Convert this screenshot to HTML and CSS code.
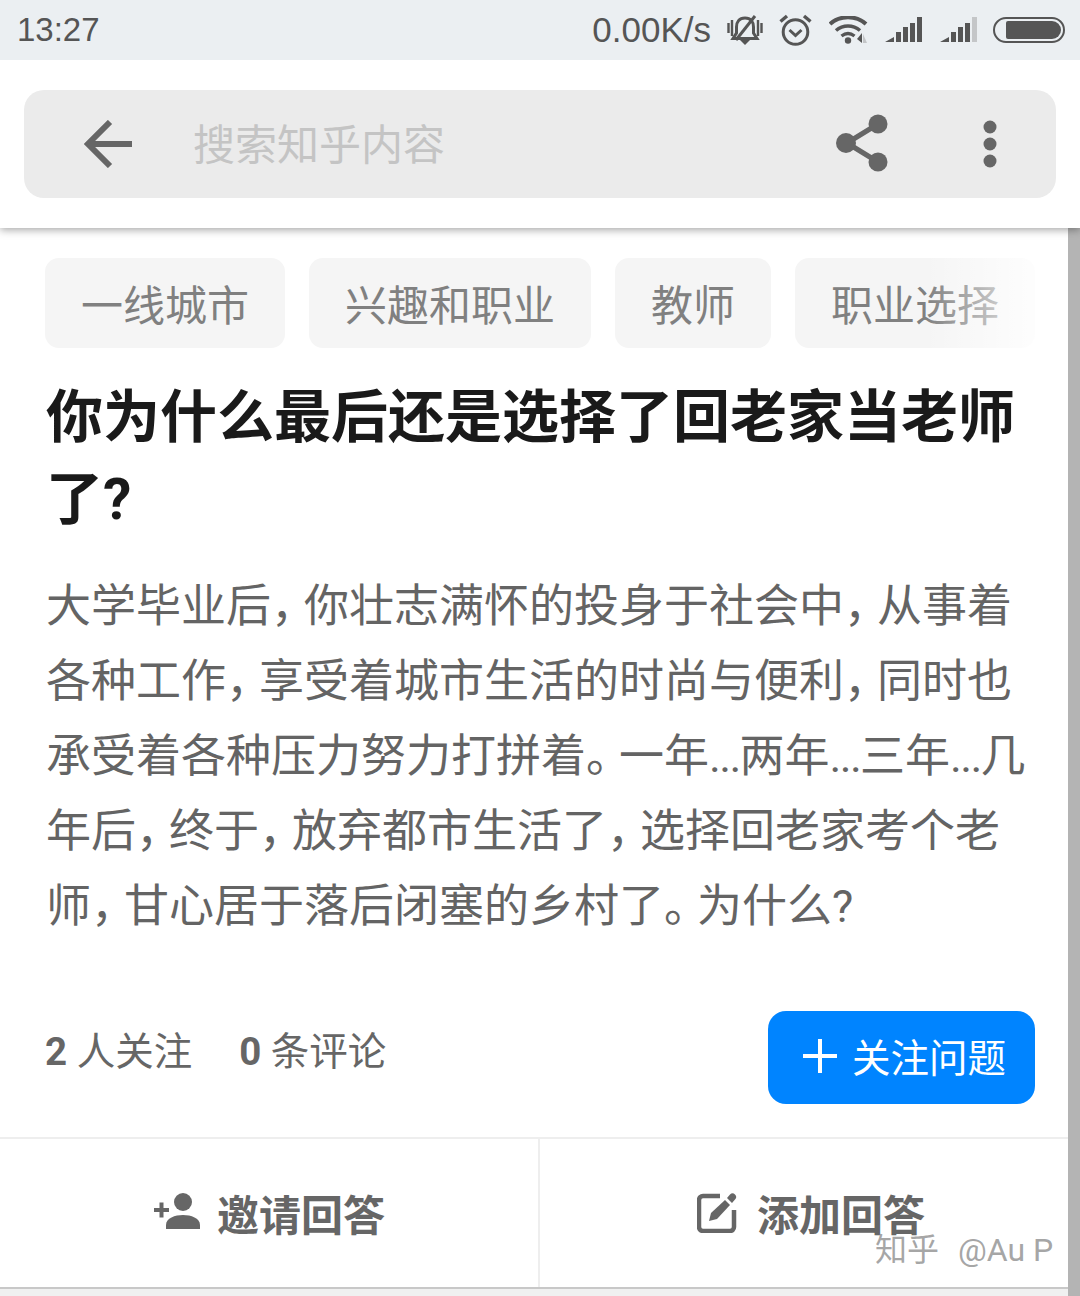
FILE: index.html
```html
<!DOCTYPE html>
<html>
  <head>
    <meta charset="utf-8" />
    <title>你为什么最后还是选择了回老家当老师了?</title>
    <link rel="stylesheet" href="styles.css">
  </head>
  <body>
    <div class="statusbar">
      <span class="clock">13:27</span>
      <div class="status-right">
        <span class="speed">0.00K/s</span>
        <svg class="ic-bell" width="36" height="32" viewBox="0 0 36 32">
          <path d="M18 4c-6 0-8.500 4-8.500 9v6l-3.500 5.500h24l-3.500-5.500v-6c0-5-2.500-9-8.500-9z" fill="none" stroke="#555" stroke-width="3"/>
          <path d="M13 26h10l-5 5z" fill="#555"/>
          <path d="M9 26L28 2" stroke="#555" stroke-width="3"/>
          <path d="M1.500 9v10M5 6v16M31 6v16M34.500 9v10" stroke="#555" stroke-width="2.400"/>
        </svg>
        <svg class="ic-alarm" width="33" height="32" viewBox="0 0 33 32">
          <circle cx="16.500" cy="18" r="12.300" fill="none" stroke="#555" stroke-width="3"/>
          <path d="M10.500 16l6 5.500 6-5.500" fill="none" stroke="#555" stroke-width="3"/>
          <path d="M1.500 7.500L8 2M31.500 7.500L25 2" stroke="#555" stroke-width="3.400"/>
        </svg>
        <svg class="ic-wifi" width="39" height="28" viewBox="0 0 39 28">
          <path d="M1 8c10-9 26-9 36 0" fill="none" stroke="#555" stroke-width="4"/>
          <path d="M7 14.500c7-6 17-6 24 0" fill="none" stroke="#555" stroke-width="3.600"/>
          <path d="M12.500 20c4-3 9-3 13 0" fill="none" stroke="#555" stroke-width="3.400"/>
          <circle cx="19" cy="24.500" r="3.200" fill="#555"/>
          <path d="M33 17v10l-5-4z" fill="#555"/>
          <path d="M34 18l4 9h-4z" fill="#c4c6c8"/>
        </svg>
        <svg class="ic-signal" width="38" height="26" viewBox="0 0 38 26">
          <path d="M0 25l9-5v5zM11 15h5v10h-5zM18 10h5v15h-5zM25 6h5v19h-5zM32 0h5v25h-5z" fill="#555"/>
        </svg>
        <svg class="ic-signal2" width="38" height="26" viewBox="0 0 38 26">
          <path d="M0 25l9-5v5zM11 15h5v10h-5zM18 10h5v15h-5zM25 6h5v19h-5z" fill="#555"/>
          <path d="M32 0h5v25h-5z" fill="#c4c6c8"/>
        </svg>
        <div class="battery"><div class="battery-fill"></div></div>
      </div>
    </div>

    <div class="header">
      <div class="searchbox">
        <svg class="ic-back" width="48" height="48" viewBox="0 0 48 48">
          <path d="M48 24H5M26 2L4 24l22 22" fill="none" stroke="#666" stroke-width="6"/>
        </svg>
        <span class="placeholder">搜索知乎内容</span>
        <svg class="ic-share" width="54" height="60" viewBox="0 0 54 60">
          <path d="M12 29L43 10M12 29l31 19" stroke="#666" stroke-width="5"/>
          <circle cx="11" cy="29" r="10" fill="#666"/>
          <circle cx="43" cy="10" r="9.500" fill="#666"/>
          <circle cx="43" cy="48" r="9.500" fill="#666"/>
        </svg>
        <svg class="ic-more" width="14" height="48" viewBox="0 0 14 48">
          <circle cx="7" cy="7" r="6.500" fill="#666"/>
          <circle cx="7" cy="24" r="6.500" fill="#666"/>
          <circle cx="7" cy="41" r="6.500" fill="#666"/>
        </svg>
      </div>
    </div>

    <div class="scrollbar"></div>

    <div class="question">
      <div class="tags">
        <span class="tag">一线城市</span>
        <span class="tag">兴趣和职业</span>
        <span class="tag">教师</span>
        <span class="tag">职业选择</span>
        <div class="tags-fade"></div>
      </div>

      <h1 class="title">你为什么最后还是选择了回老家当老师<br>了?</h1>

      <p class="detail">大学毕业后<i>，</i>你壮志满怀的投身于社会中<i>，</i>从事着<br>各种工作<i>，</i>享受着城市生活的时尚与便利<i>，</i>同时也<br>承受着各种压力努力打拼着<i>。</i>一年<b>...</b>两年<b>...</b>三年<b>...</b>几<br>年后<i>，</i>终于<i>，</i>放弃都市生活了<i>，</i>选择回老家考个老<br>师<i>，</i>甘心居于落后闭塞的乡村了<i>。</i>为什么?</p>

      <div class="meta">
        <div class="counts">
          <span><strong>2</strong> 人关注</span>
          <span><strong>0</strong> 条评论</span>
        </div>
        <button class="follow">
          <svg class="follow-plus" width="34" height="34" viewBox="0 0 34 34">
            <path d="M17 0v34M0 17h34" stroke="#fff" stroke-width="4"/>
          </svg>
          <span class="follow-label">关注问题</span>
        </button>
      </div>
    </div>

    <div class="actions">
      <div class="action">
        <svg width="48" height="40" viewBox="0 0 48 40">
          <path d="M1 18h15M8.500 10.500v15" stroke="#666" stroke-width="4"/>
          <circle cx="30" cy="10" r="9" fill="#666"/>
          <path d="M13 37v-4c0-7 9-10 17-10s17 3 17 10v4z" fill="#666"/>
        </svg>
        邀请回答
      </div>
      <div class="action action-add">
        <svg width="40" height="42" viewBox="0 0 40 42">
          <path d="M23 5H6a4 4 0 0 0-4 4v27a4 4 0 0 0 4 4h27a4 4 0 0 0 4-4V19" fill="none" stroke="#666" stroke-width="4.500"/>
          <path d="M12 30l2-8 14-13 5 5-13 14z" fill="#666"/>
          <path d="M30 7l3-3.500a2.500 2.500 0 0 1 5 5L35 12z" fill="#666"/>
        </svg>
        添加回答
      </div>
    </div>
    <div class="bottom"></div>

    <div class="watermark"><span class="watermark-site">知乎</span> @Au P</div>
  </body>
</html>
```

FILE: styles.css
```css
html, body {
  margin:0;
  padding:0;
  background-color:#fff;
  height:1296px;
  overflow:hidden;
  font-family:Roboto, "Noto Sans CJK SC", sans-serif;
}

.statusbar {
  position:relative;
  z-index:3;
  height:60px;
  background-color:#ebeff2;
  display:flex;
  align-items:center;
  justify-content:space-between;
  padding:0 15px 0 17px;
  color:#555;
  font-family:"Liberation Sans", sans-serif;
  font-size:33px;
}

.status-right {
  display:flex;
  align-items:center;
}

.speed {
  margin-right:16px;
  font-size:35px;
}

.ic-alarm { margin-left:16px; }
.ic-wifi { margin-left:17px; }
.ic-signal { margin-left:17px; }
.ic-signal2 { margin-left:17px; }

.battery {
  width:72px;
  height:26px;
  margin-left:15px;
  box-sizing:border-box;
  border:2px solid #555;
  border-radius:13px;
  padding:2px 2px 2px 11px;
}

.battery-fill {
  height:100%;
  background-color:#555;
  border-radius:2px 9px 9px 2px;
}

.header {
  position:relative;
  z-index:2;
  height:168px;
  background-color:#fff;
  padding:30px 24px;
  box-sizing:border-box;
  box-shadow:0 2px 8px rgba(0,0,0,0.35);
}

.searchbox {
  height:108px;
  background-color:#ebebeb;
  border-radius:20px;
  display:flex;
  align-items:center;
  padding:0 59px 0 60px;
}

.ic-back {
  flex:none;
}

.placeholder {
  flex:1;
  margin-left:61px;
  font-size:42px;
  line-height:112px;
  height:108px;
  color:#c4c4c4;
}

.ic-more {
  margin-left:94px;
}

.scrollbar {
  position:absolute;
  top:228px;
  right:0;
  bottom:0;
  width:12px;
  background-color:#b4b4b4;
}

.question {
  padding:30px 45px 0 46px;
}

.tags {
  position:relative;
  display:flex;
  gap:24px;
  margin-left:-1px;
}

.tag {
  height:90px;
  line-height:97px;
  padding:0 36px;
  font-size:42px;
  color:#808080;
  background-color:#f5f5f5;
  border-radius:14px;
  white-space:nowrap;
}

.tags-fade {
  position:absolute;
  top:0;
  right:0;
  width:110px;
  height:90px;
  background:linear-gradient(to right, rgba(255,255,255,0), rgba(255,255,255,0.85));
}

.title {
  margin:29px 0 0;
  font-size:57px;
  line-height:82px;
  font-weight:bold;
  color:#1a1a1a;
  white-space:nowrap;
}

.detail {
  margin:28px 0 0;
  font-size:45px;
  line-height:75px;
  color:#646464;
  white-space:nowrap;
}

.detail i {
  font-style:normal;
  letter-spacing:-12px;
}

.detail b {
  font-weight:normal;
  letter-spacing:-1.700px;
}

.meta {
  margin-top:67px;
  display:flex;
  align-items:center;
  justify-content:space-between;
}

.counts {
  display:flex;
  gap:47px;
  margin:0 0 20px -1px;
  font-size:38.500px;
  color:#666;
}

.follow {
  display:flex;
  align-items:center;
  gap:15px;
  width:267px;
  height:93px;
  padding:0 0 0 35px;
  border:0;
  border-radius:18px;
  background-color:#0084ff;
  color:#fff;
  font-family:inherit;
  font-size:38.500px;
}

.follow-plus {
  margin-bottom:3px;
}

.follow-label {
  padding-bottom:6px;
}

.actions {
  margin-top:33px;
  height:150px;
  display:flex;
  border-top:2px solid #eee;
  box-sizing:border-box;
}

.action {
  flex:1;
  display:flex;
  align-items:center;
  justify-content:center;
  gap:16px;
  padding-bottom:2px;
  font-size:42px;
  font-weight:bold;
  color:#666;
}

.action-add {
  gap:20px;
  padding-left:2px;
  border-left:2px solid #eee;
}

.bottom {
  height:9px;
  background-color:#f0f0f0;
  border-top:2px solid #c8c8c8;
  box-sizing:border-box;
}

.watermark {
  position:absolute;
  left:875px;
  top:1233px;
  font-size:32px;
  line-height:34px;
  color:rgba(150,150,150,0.85);
  text-shadow:1px 1px 0 rgba(255,255,255,0.8);
  white-space:nowrap;
}

.watermark-site {
  margin-right:11px;
}
```
